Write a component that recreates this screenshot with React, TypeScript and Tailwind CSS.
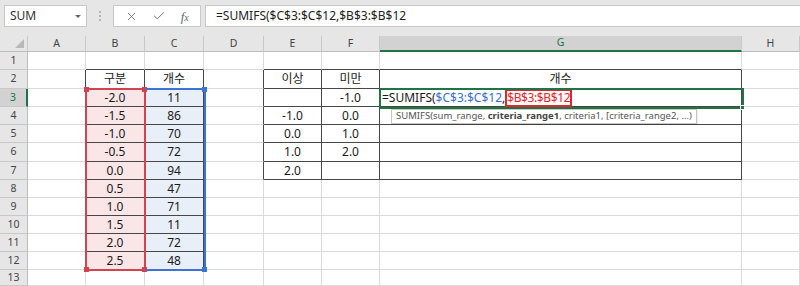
import React from 'react';
import { X, Check } from 'lucide-react';

const COLS = ['A', 'B', 'C', 'D', 'E', 'F', 'G', 'H'];
const ROWS = [1, 2, 3, 4, 5, 6, 7, 8, 9, 10, 11, 12, 13];

const B_VALS = ['-2.0', '-1.5', '-1.0', '-0.5', '0.0', '0.5', '1.0', '1.5', '2.0', '2.5'];
const C_VALS = ['11', '86', '70', '72', '94', '47', '71', '11', '72', '48'];

const cells: Record<string, string> = {
  '2-B': '구분',
  '2-C': '개수',
  '2-E': '이상',
  '2-F': '미만',
  '2-G': '개수',
  '3-F': '-1.0',
  '4-E': '-1.0',
  '4-F': '0.0',
  '5-E': '0.0',
  '5-F': '1.0',
  '6-E': '1.0',
  '6-F': '2.0',
  '7-E': '2.0',
};
B_VALS.forEach((v, i) => (cells[`${i + 3}-B`] = v));
C_VALS.forEach((v, i) => (cells[`${i + 3}-C`] = v));

const FONT = { fontFamily: '"Noto Sans", "Noto Sans CJK KR", sans-serif' };

function isRightDark(r: number, ci: number) {
  if (ci <= 2 && r >= 2 && r <= 12) return true;
  if (ci >= 3 && ci <= 6 && r >= 2 && r <= 7) return true;
  return false;
}

function isBottomDark(r: number, ci: number) {
  if ((ci === 1 || ci === 2) && r >= 1 && r <= 12) return true;
  if (ci >= 4 && ci <= 6 && r >= 1 && r <= 7) return true;
  return false;
}

function Cell({ r, ci }: { r: number; ci: number }) {
  const col = COLS[ci];
  const text = cells[`${r}-${col}`];
  const right = isRightDark(r, ci) ? 'border-r-[#474747]' : 'border-r-[#dadada]';
  const bottom = isBottomDark(r, ci) ? 'border-b-[#474747]' : 'border-b-[#dadada]';
  let bg = 'bg-white';
  if (col === 'B' && r >= 3 && r <= 12) bg = 'bg-[#fbe6e7]';
  if (col === 'C' && r >= 3 && r <= 12) bg = 'bg-[#e9eff9]';

  if (r === 3 && col === 'G') {
    // cell being edited
    return (
      <div className={`border-r border-b ${right} ${bottom} ${bg} flex items-center pl-[2px] text-[12px] text-[#1a1a1a] whitespace-nowrap`}>
        <span>=SUMIFS(</span>
        <span className="text-[#3b6fd1]">$C$3:$C$12</span>
        <span>,</span>
        <span className="inline-flex items-center h-[18px] border-2 border-[#e3262b] text-[#e3262b] tracking-[-0.4px]">$B$3:$B$12</span>
      </div>
    );
  }

  return (
    <div className={`border-r border-b ${right} ${bottom} ${bg} flex items-center justify-center text-[12px] text-[#1a1a1a] whitespace-nowrap`}>
      {text}
    </div>
  );
}

export default function App() {
  return (
    <div className="w-[800px] h-[286px] overflow-hidden bg-white" style={FONT}>
      {/* formula bar */}
      <div className="h-[36px] bg-[#e6e6e6] flex items-start pt-[5px]">
        <div className="ml-[4px] w-[83px] h-[22px] bg-white border border-[#c8c8c8] flex items-center justify-between pl-[5px] pr-[5px]">
          <span className="text-[12px] text-[#333]">SUM</span>
          <span className="w-0 h-0 border-l-[3px] border-r-[3px] border-t-[3px] border-l-transparent border-r-transparent border-t-[#666]" />
        </div>
        <div className="w-[26px] h-[22px] flex flex-col items-center justify-center gap-[2px]">
          <span className="w-[2px] h-[2px] bg-[#b5b5b5]" />
          <span className="w-[2px] h-[2px] bg-[#b5b5b5]" />
          <span className="w-[2px] h-[2px] bg-[#b5b5b5]" />
        </div>
        <div className="w-[88px] h-[22px] bg-white border border-[#c8c8c8] flex items-center justify-around px-[4px] text-[#666]">
          <X size={13} strokeWidth={1.4} />
          <Check size={14} strokeWidth={1.6} />
          <span className="text-[13px] italic leading-none" style={{ fontFamily: '"Liberation Serif", serif' }}>
            f<span className="text-[10px]">x</span>
          </span>
        </div>
        <div className="ml-[4px] flex-1 h-[22px] bg-white border border-r-0 border-[#c8c8c8] flex items-center pl-[10px] text-[12px] text-[#222] whitespace-nowrap">
          =SUMIFS($C$3:$C$12,$B$3:$B$12
        </div>
      </div>

      {/* sheet */}
      <div className="relative">
        <div className="grid grid-cols-[28px_58px_59px_59px_60px_58px_58px_362px_58px] grid-rows-[16px_18px_19px_18px_18px_18px_19px_18px_18px_18px_18px_18px_18px_16px]">
          {/* corner */}
          <div className="relative bg-[#e6e6e6] border-r border-b border-r-[#c8c8c8] border-b-[#bdbdbd]">
            <span
              className="absolute right-[3px] bottom-[3px] w-0 h-0"
              style={{ borderLeft: '9px solid transparent', borderBottom: '9px solid #b8b8b8' }}
            />
          </div>
          {COLS.map((c) =>
            c === 'G' ? (
              <div key={c} className="bg-[#d2d2d2] border-r border-r-[#c8c8c8] border-b-2 border-b-[#217346] flex items-center justify-center text-[10.5px] text-[#217346]">
                {c}
              </div>
            ) : (
              <div key={c} className="bg-[#e6e6e6] border-r border-b border-r-[#c8c8c8] border-b-[#bdbdbd] flex items-center justify-center text-[10.5px] text-[#444]">
                {c}
              </div>
            )
          )}

          {ROWS.map((r) => (
            <React.Fragment key={r}>
              {r === 3 ? (
                <div className="bg-[#d2d2d2] border-b border-b-[#c8c8c8] border-r-2 border-r-[#217346] flex items-center justify-center text-[10.5px] text-[#217346]">
                  {r}
                </div>
              ) : (
                <div className="bg-[#e6e6e6] border-r border-b border-r-[#bdbdbd] border-b-[#c8c8c8] flex items-center justify-center text-[10.5px] text-[#444]">
                  {r}
                </div>
              )}
              {COLS.map((_, ci) => (
                <Cell key={ci} r={r} ci={ci} />
              ))}
            </React.Fragment>
          ))}
        </div>

        {/* range highlight B3:B12 */}
        <div className="absolute left-[85px] top-[52px] w-[61px] h-[183px] border-2 border-[#d0434f] pointer-events-none">
          <span className="absolute -left-[3px] -top-[3px] w-[5px] h-[5px] bg-[#d0434f]" />
          <span className="absolute -right-[3px] -top-[3px] w-[5px] h-[5px] bg-[#d0434f]" />
          <span className="absolute -left-[3px] -bottom-[3px] w-[5px] h-[5px] bg-[#d0434f]" />
          <span className="absolute -right-[3px] -bottom-[3px] w-[5px] h-[5px] bg-[#d0434f]" />
        </div>
        {/* range highlight C3:C12 */}
        <div className="absolute left-[146px] top-[52px] w-[60px] h-[183px] border-2 border-l-0 border-[#3c74d6] pointer-events-none">
          <span className="absolute -right-[3px] -top-[3px] w-[5px] h-[5px] bg-[#3c74d6]" />
          <span className="absolute -right-[3px] -bottom-[3px] w-[5px] h-[5px] bg-[#3c74d6]" />
        </div>

        {/* active cell G3 */}
        <div className="absolute left-[379px] top-[52px] w-[365px] h-[21px] border-2 border-[#217346] pointer-events-none">
          <span className="absolute -right-[3px] -bottom-[3px] w-[5px] h-[5px] bg-[#217346] border border-white" />
        </div>

        {/* function tooltip */}
        <div className="absolute left-[391px] top-[73px] h-[15px] bg-white border border-[#c6c6c6] flex items-center px-[4px] text-[9.5px] text-[#555] whitespace-nowrap shadow-[1px_1px_1px_rgba(0,0,0,0.08)]">
          SUMIFS(sum_range,&nbsp;<b className="font-bold text-[#444]">criteria_range1</b>, criteria1, [criteria_range2, ...)
        </div>
      </div>
    </div>
  );
}
